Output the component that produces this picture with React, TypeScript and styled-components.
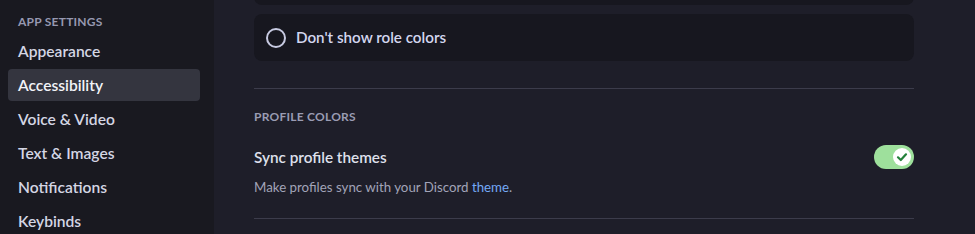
import React from 'react';
import styled, { createGlobalStyle, css } from 'styled-components';

const GlobalStyle = createGlobalStyle`
  * { box-sizing: border-box; }
  html, body { margin: 0; padding: 0; background: #1e1e29; }
  body {
    font-family: Lato, "Noto Sans", sans-serif;
    -webkit-font-smoothing: antialiased;
  }
`;

const navItems = [
  'Appearance',
  'Accessibility',
  'Voice & Video',
  'Text & Images',
  'Notifications',
  'Keybinds',
];

const App = () => {
  return (
    <>
      <GlobalStyle />
      <Layout>
        <Sidebar>
          <SidebarHeader>App Settings</SidebarHeader>
          {navItems.map((item) => (
            <NavItem key={item} selected={item === 'Accessibility'}>
              {item}
            </NavItem>
          ))}
        </Sidebar>
        <Content>
          <Scroller>
            <Card height={45} />
            <Card>
              <RadioRow>
                <RadioCircle />
                <RadioLabel>Don&apos;t show role colors</RadioLabel>
              </RadioRow>
            </Card>
            <Divider />
            <SectionTitle>Profile Colors</SectionTitle>
            <SettingRow>
              <SettingTitle>Sync profile themes</SettingTitle>
              <Toggle>
                <Knob>
                  <svg width="12" height="12" viewBox="0 0 12 12">
                    <path
                      d="M2 6.3 L4.8 9 L10 3.3"
                      fill="none"
                      stroke="#23813a"
                      strokeWidth="2.2"
                      strokeLinecap="round"
                      strokeLinejoin="round"
                    />
                  </svg>
                </Knob>
              </Toggle>
            </SettingRow>
            <Description>
              Make profiles sync with your Discord <Link>theme</Link>.
            </Description>
            <Divider bottom />
          </Scroller>
        </Content>
      </Layout>
    </>
  );
};

export default App;

const Layout = styled.div`
  display: flex;
  width: 975px;
  height: 234px;
  overflow: hidden;
`;

const Sidebar = styled.nav`
  width: 214px;
  flex-shrink: 0;
  background: #191920;
  padding: 14px 14px 0 8px;
  display: flex;
  flex-direction: column;
  gap: 2px;
`;

const SidebarHeader = styled.div`
  flex-shrink: 0;
  padding: 0 10px;
  margin-bottom: 3px;
  font-size: 12px;
  line-height: 16px;
  font-weight: 700;
  text-transform: uppercase;
  letter-spacing: 0.02em;
  color: #9698b0;
`;

const NavItem = styled.div<{ selected?: boolean }>`
  flex-shrink: 0;
  height: 32px;
  padding: 0 10px;
  display: flex;
  align-items: center;
  border-radius: 4px;
  font-size: 15.6px;
  font-weight: 600;
  color: #d4d6e4;
  ${(props) =>
    props.selected &&
    css`
      background: #34353f;
      color: #f2f3f8;
    `}
`;

const Content = styled.main`
  flex: 1;
  padding: 0 61px 0 40px;
  overflow: hidden;
`;

const Scroller = styled.div`
  margin-top: -40px;
  display: flex;
  flex-direction: column;
`;

const Card = styled.div<{ height?: number }>`
  flex-shrink: 0;
  background: #17171f;
  border-radius: 8px;
  margin-bottom: 9px;
  ${(props) =>
    props.height &&
    css`
      height: ${props.height}px;
    `}
`;

const RadioRow = styled.div`
  height: 47px;
  display: flex;
  align-items: center;
  padding: 0 12px;
  gap: 10px;
`;

const RadioCircle = styled.div`
  width: 20px;
  height: 20px;
  border-radius: 50%;
  border: 2px solid #c8cbe2;
`;

const RadioLabel = styled.span`
  font-size: 15.2px;
  font-weight: 600;
  color: #d3d6ef;
  margin-bottom: 1px;
`;

const Divider = styled.div<{ bottom?: boolean }>`
  flex-shrink: 0;
  height: 1px;
  background: #3c3c4b;
  margin-top: ${(props) => (props.bottom ? '21px' : '18px')};
`;

const SectionTitle = styled.h2`
  margin: 20px 0 0;
  font-size: 12px;
  line-height: 16px;
  font-weight: 700;
  text-transform: uppercase;
  letter-spacing: 0.02em;
  color: #9a9cb3;
`;

const SettingRow = styled.div`
  margin-top: 20px;
  height: 24px;
  display: flex;
  align-items: center;
  justify-content: space-between;
`;

const SettingTitle = styled.span`
  font-size: 15.3px;
  font-weight: 600;
  color: #dfe0ec;
`;

const Toggle = styled.div`
  width: 40px;
  height: 24px;
  border-radius: 12px;
  background: #9ee09c;
  display: flex;
  align-items: center;
  justify-content: flex-end;
  padding: 0 3px;
`;

const Knob = styled.div`
  width: 18px;
  height: 18px;
  border-radius: 50%;
  background: #ffffff;
  display: flex;
  align-items: center;
  justify-content: center;
`;

const Description = styled.p`
  margin: 8px 0 0;
  font-size: 13.3px;
  line-height: 20px;
  color: #a2a4b8;
`;

const Link = styled.span`
  color: #74a9f6;
`;
